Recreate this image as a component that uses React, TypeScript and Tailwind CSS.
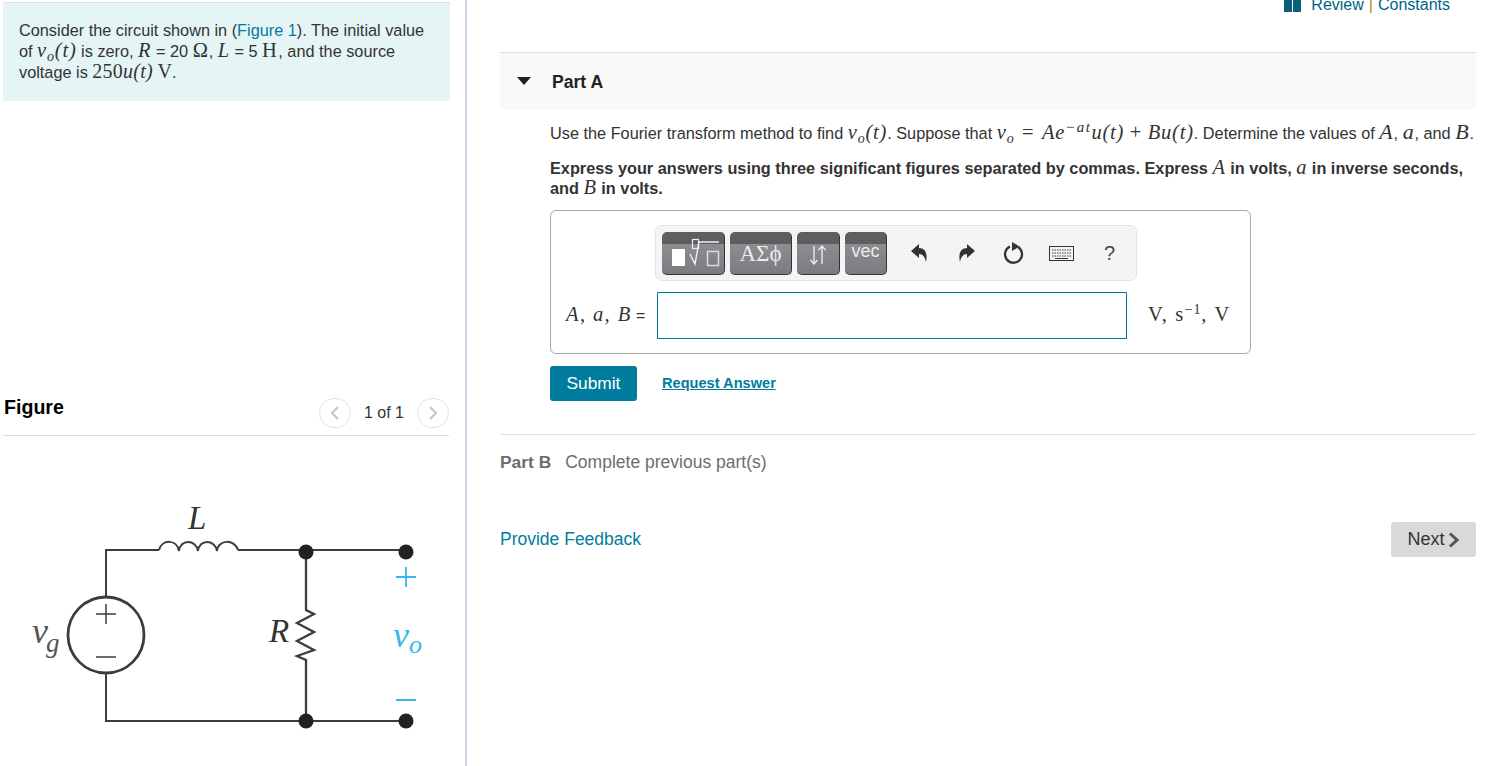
import React from 'react';

const serif = "font-['Liberation_Serif',serif]";

function M({ children, className = 'text-[20.5px] tracking-[0.8px]' }: { children: React.ReactNode; className?: string }) {
  return <span className={`${serif} italic leading-[0] text-[#333] ${className}`}>{children}</span>;
}

function R({ children, className = 'text-[20.5px] tracking-[0.8px]' }: { children: React.ReactNode; className?: string }) {
  return <span className={`${serif} leading-[0] text-[#333] ${className}`}>{children}</span>;
}

function VO() {
  return (
    <M>
      v<sub className="text-[14px]">o</sub>
    </M>
  );
}

function ToolButton({ width, children }: { width: string; children: React.ReactNode }) {
  return (
    <div
      className={`${width} h-[43px] rounded-[5px] border-b border-r border-[#333] bg-[linear-gradient(#5e5e5e_0,#5e5e5e_28%,#8c8c91_28%,#7b7b80_100%)] flex items-center justify-center text-[#ececec]`}
    >
      {children}
    </div>
  );
}

function Circuit() {
  return (
    <svg viewBox="0 500 450 240" width="450" height="240" className="block mt-[64px]">
      <g fill="none" stroke="#3c3c3c" strokeWidth="2">
        <path d="M159 550 H106 V597 M106 673 V721 H406 M238 550 H406" />
        <path d="M159 550 C162 539 177 539 179 551 C180 539 196 539 198 551 C199 539 215 539 217 551 C218 539 235 539 238 550" />
        <path d="M306 552 V610 L314 614 L297 623 L314 632 L297 641 L314 650 L297 656 L306 660 V721" strokeWidth="2.3" />
        <circle cx="106" cy="635" r="38" strokeWidth="2.8" />
        <path d="M96 614 H116 M106 604 V624 M96 657 H116" strokeWidth="1.5" />
      </g>
      <g fill="#222">
        <circle cx="306" cy="552" r="7.5" />
        <circle cx="406" cy="552" r="7.5" />
        <circle cx="306" cy="721" r="7.5" />
        <circle cx="406" cy="721" r="7.5" />
      </g>
      <path d="M396 577 H416 M406 567 V587 M396 700 H416" stroke="#35b7ec" strokeWidth="1.8" fill="none" />
      <g className={serif} fontStyle="italic" fill="#333">
        <text x="188" y="529" fontSize="33">L</text>
        <text x="269" y="642" fontSize="33">R</text>
        <text x="32" y="643" fontSize="36" fill="#555">v</text>
        <text x="46" y="652" fontSize="27" fill="#555">g</text>
      </g>
      <g className={serif} fontStyle="italic" fill="#35b7ec">
        <text x="393" y="647" fontSize="36">v</text>
        <text x="409" y="653" fontSize="26">o</text>
      </g>
    </svg>
  );
}

function LeftPanel() {
  return (
    <div className="w-[467px] shrink-0 border-r-2 border-[#c9d6e4] h-[766px] overflow-hidden">
      <div className="ml-[3px] mr-[15px] mt-[2px] border-t border-[#e2e2e2]">
        <div className="h-[98px] bg-[#e5f5f6] pl-[16px] pt-[17px] text-[16.3px] leading-[21px] text-[#333] whitespace-nowrap">
          <p>
            Consider the circuit shown in (<span className="text-[#007c9e]">Figure 1</span>). The initial value
          </p>
          <p>
            of <VO />
            <M>(t)</M> is zero, <M>R</M> = 20 <R>Ω</R>, <M>L</M> = 5 <R className="text-[20.5px] tracking-[1.4px]">H</R>, and the source
          </p>
          <p>
            voltage is <R className="text-[20px] tracking-[0.2px]">250</R>
            <M className="text-[20px] tracking-[0.3px]">u</M>
            <M className="text-[20px] tracking-[0.3px]">(t)</M> <R className="text-[20px] tracking-[0px]">V</R>.
          </p>
        </div>
      </div>
      <div className="ml-[3px] mr-[16px] mt-[287px] h-[48px] border-b border-[#dcdcdc] flex items-start justify-between">
        <span className="text-[19.6px] font-bold text-black leading-[22px] ml-[1px] mt-[8px]">Figure</span>
        <div className="flex items-center mt-[10px]">
          <div className="w-[32px] h-[30px] rounded-full border border-[#e2e2e2] flex items-center justify-center">
            <svg width="10" height="14" viewBox="0 0 10 14" fill="none" stroke="#c4c4c4" strokeWidth="2">
              <path d="M8 1 L2 7 L8 13" />
            </svg>
          </div>
          <span className="text-[16px] text-[#333] mx-[13px]">1 of 1</span>
          <div className="w-[32px] h-[30px] rounded-full border border-[#e2e2e2] flex items-center justify-center">
            <svg width="10" height="14" viewBox="0 0 10 14" fill="none" stroke="#c4c4c4" strokeWidth="2">
              <path d="M2 1 L8 7 L2 13" />
            </svg>
          </div>
        </div>
      </div>
      <Circuit />
    </div>
  );
}

function Toolbar() {
  return (
    <div className="w-[482px] h-[56px] ml-[104px] mt-[14px] rounded-[7px] border border-[#e2e2e2] bg-[#f4f4f4] flex items-center pl-[6px]">
      <div className="flex gap-[5px]">
        <ToolButton width="w-[63px]">
          <svg width="62" height="42" viewBox="0 0 62 42" fill="none" className="shrink-0">
            <rect x="10" y="17" width="13" height="17" fill="#fff" />
            <rect x="30.5" y="7.5" width="6" height="9" stroke="#eee" strokeWidth="1.2" />
            <path d="M28 22 L33 32 L37 10 H57" stroke="#f0f0f0" strokeWidth="1.4" />
            <rect x="45.5" y="19.5" width="11" height="14" stroke="#dcdcdc" strokeWidth="1.5" />
          </svg>
        </ToolButton>
        <ToolButton width="w-[62px]">
          <span className={`${serif} text-[23px] leading-none mt-[2px]`}>ΑΣϕ</span>
        </ToolButton>
        <ToolButton width="w-[43px]">
          <svg width="20" height="22" viewBox="0 0 20 22" fill="none" stroke="#ececec" strokeWidth="1.4" className="mt-[4px]">
            <path d="M6 2 V20 M2.5 16 L6 20 L9.5 16 M14 20 V2 M10.5 6 L14 2 L17.5 6" />
          </svg>
        </ToolButton>
        <ToolButton width="w-[42px]">
          <span className="text-[18px] leading-none mb-[4px]">vec</span>
        </ToolButton>
      </div>
      <div className="flex items-center text-[#333] ml-[23px]">
        <svg width="20" height="20" viewBox="0 0 20 20" fill="#333">
          <path d="M1 8 L9 1 V5 C15 5 18 10 16 19 C15 14 13 11 9 11 V15 Z" />
        </svg>
        <svg width="20" height="20" viewBox="0 0 20 20" fill="#333" className="ml-[26px]">
          <path d="M19 8 L11 1 V5 C5 5 2 10 4 19 C5 14 7 11 11 11 V15 Z" />
        </svg>
        <svg width="22" height="24" viewBox="0 0 22 24" fill="none" className="ml-[27px]">
          <path d="M15 6 A8.5 8.5 0 1 1 7 5.5" stroke="#333" strokeWidth="2.3" />
          <path d="M9 1 L16.5 5.5 L9 10 Z" fill="#333" />
        </svg>
        <svg width="25" height="15" viewBox="0 0 25 15" fill="none" className="ml-[24px]">
          <rect x="0.5" y="0.5" width="24" height="14" fill="#f4f4f4" stroke="#333" />
          <path d="M3 4 H22 M3 7 H22 M3 10 H22" stroke="#777" strokeWidth="1.4" strokeDasharray="1.5 1" />
          <path d="M6 12.5 H19" stroke="#333" />
        </svg>
        <span className="text-[20px] leading-none ml-[30px] text-[#444]">?</span>
      </div>
    </div>
  );
}

function RightPanel() {
  return (
    <div className="flex-1 min-w-0 pl-[33px] pr-[16px] h-[766px] overflow-hidden">
      <div className="h-[53px] flex justify-end items-start pr-[26px] border-b border-[#e0e0e0]">
        <div className="flex items-center -mt-[4px] text-[16px] leading-[18px] text-[#00647f]">
          <svg width="17" height="15" viewBox="0 0 17 15" fill="#0b5f78" className="mr-[10px] -mt-[2px]">
            <rect x="0" y="0" width="8" height="15" />
            <rect x="9" y="0" width="8" height="15" />
          </svg>
          <span>Review</span>
          <span className="mx-[5px] text-[#c27f2c]">|</span>
          <span>Constants</span>
        </div>
      </div>

      <div className="h-[57px] bg-[#f9f9f9] flex items-center">
        <svg width="14" height="8" viewBox="0 0 14 8" className="ml-[17px] -mt-[2px]">
          <path d="M0 0 H14 L7 8 Z" fill="#222" />
        </svg>
        <span className="ml-[21px] mt-[2px] text-[17.6px] font-bold text-[#222]">Part A</span>
      </div>

      <div className="pl-[50px] text-[#333]">
        <p className="mt-[11px] text-[16.3px] leading-[24px] whitespace-nowrap">
          Use the Fourier transform method to find <VO />
          <M>(t)</M>. Suppose that <VO /> <R className="text-[20.5px] tracking-[0.8px] mx-[3px]">=</R> <M>Ae</M>
          <sup className={`${serif} italic text-[15px] tracking-[1.5px]`}>−at</sup>
          <M>u</M>
          <M>(t)</M> <R className="text-[20.5px] tracking-[0.8px] mx-[1px]">+</R> <M>Bu</M>
          <M>(t)</M>. Determine the values of <M className="text-[22px] tracking-[0.8px]">A</M>,{' '}
          <M className="text-[22px] tracking-[0.8px]">a</M>, and <M className="text-[22px] tracking-[0.8px]">B</M>.
        </p>
        <p className="mt-[13px] text-[16.3px] leading-[20px] font-bold">
          Express your answers using three significant figures separated by commas. Express{' '}
          <M className="text-[20.5px] tracking-[0.8px] font-normal">A</M> in volts,{' '}
          <M className="text-[20.5px] tracking-[0.8px] font-normal">a</M> in inverse seconds, and{' '}
          <M className="text-[20.5px] tracking-[0.8px] font-normal">B</M> in volts.
        </p>

        <div className="w-[701px] h-[144px] mt-[12px] rounded-[6px] border border-[#aaa] overflow-hidden">
          <Toolbar />
          <div className="flex items-center mt-[11px] ml-[15px]">
            <div className="w-[91px] whitespace-nowrap">
              <M className="text-[20.5px] tracking-[1.4px]">A, a, B</M> <span className="text-[16px]">=</span>
            </div>
            <div className="w-[470px] h-[47px] border border-[#007c9e] bg-white" />
            <div className="ml-[21px] whitespace-nowrap">
              <R className="text-[20.5px] tracking-[1.6px]">V, s</R>
              <sup className={`${serif} text-[14px] tracking-[0.8px]`}>−1</sup>
              <R className="text-[20.5px] tracking-[1.6px]">, V</R>
            </div>
          </div>
        </div>

        <div className="flex items-center mt-[12px]">
          <div className="w-[87px] h-[35px] rounded-[3px] bg-[#007c9e] text-white text-[17.3px] flex items-center justify-center">
            Submit
          </div>
          <span className="ml-[25px] text-[14.6px] font-bold text-[#007c9e] underline">Request Answer</span>
        </div>
      </div>

      <div className="mt-[33px] border-t border-[#e0e0e0] pt-[16px] flex items-center text-[#6d6d6d] leading-[22px]">
        <span className="text-[17.4px] font-bold">Part B</span>
        <span className="ml-[14px] text-[17.5px]">Complete previous part(s)</span>
      </div>

      <div className="mt-[49px] flex items-start justify-between">
        <span className="text-[17.5px] leading-[22px] text-[#007c9e] mt-[6px]">Provide Feedback</span>
        <div className="w-[85px] h-[35px] rounded-[3px] bg-[#d9d9d9] flex items-center justify-center text-[18px] text-[#333]">
          Next
          <svg width="12" height="16" viewBox="0 0 12 16" fill="none" stroke="#555" strokeWidth="3" className="ml-[3px]">
            <path d="M2 1.5 L9 8 L2 14.5" />
          </svg>
        </div>
      </div>
    </div>
  );
}

export default function App() {
  return (
    <div className="flex h-[766px] w-[1492px] overflow-hidden bg-white font-['Liberation_Sans',Arial,sans-serif]">
      <LeftPanel />
      <RightPanel />
    </div>
  );
}
